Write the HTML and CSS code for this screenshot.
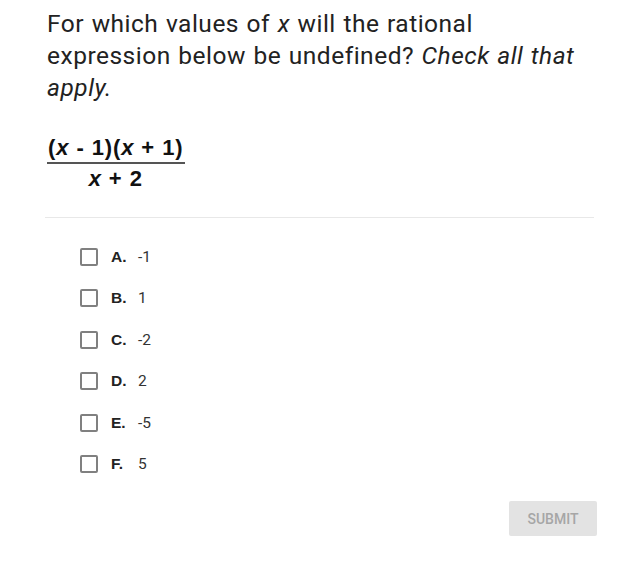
FILE: index.html
```html
<!DOCTYPE html>
<html>
<head>
<meta charset="utf-8">
<link rel="stylesheet" href="styles.css">
</head>
<body>
<div class="page">
  <p class="question">For which values of <i>x</i> will the rational expression below be undefined? <i>Check all that apply.</i></p>
  <div class="fraction">
    <div class="num">(<i>x</i> - 1)(<i>x</i> + 1)</div>
    <div class="den"><i>x</i> + 2</div>
  </div>
  <hr class="divider">
  <ul class="options">
    <li class="option"><span class="box"></span><b class="letter">A.</b><span class="val">-1</span></li>
    <li class="option"><span class="box"></span><b class="letter">B.</b><span class="val">1</span></li>
    <li class="option"><span class="box"></span><b class="letter">C.</b><span class="val">-2</span></li>
    <li class="option"><span class="box"></span><b class="letter">D.</b><span class="val">2</span></li>
    <li class="option"><span class="box"></span><b class="letter">E.</b><span class="val">-5</span></li>
    <li class="option"><span class="box"></span><b class="letter">F.</b><span class="val">5</span></li>
  </ul>
  <div class="actions"><button class="submit">SUBMIT</button></div>
</div>
</body>
</html>
```
FILE: styles.css
```css
html, body { margin: 0; padding: 0; background: #fff; }
.page {
  padding: 8px 0 0 47px;
  width: 550px;
  font-family: Roboto, "Liberation Sans", sans-serif;
  color: #222;
}
.question {
  margin: 0;
  font-size: 24.5px;
  letter-spacing: 0.5px;
  word-spacing: 1px;
  line-height: 32px;
  width: 540px;
}
.fraction {
  display: inline-flex;
  flex-direction: column;
  align-items: center;
  margin-top: 31px;
  font-family: "Liberation Sans", Arial, sans-serif;
  font-weight: bold;
  font-size: 22px;
  letter-spacing: 0.9px;
  color: #111;
}
.num {
  padding: 0 1px 1px;
  border-bottom: 2px solid #555;
  line-height: 26px;
}
.den { line-height: 30px; }
.divider {
  margin: 23px 0 0 -2px;
  width: 549px;
  border: 0;
  border-top: 1px solid #e8e8e8;
}
.options {
  list-style: none;
  margin: 18px 0 0 33px;
  padding: 0;
}
.option {
  display: flex;
  align-items: center;
  height: 41.5px;
  font-family: "Liberation Sans", Arial, sans-serif;
  font-size: 15.5px;
  color: #222;
}
.box {
  width: 14px;
  height: 14px;
  border: 2px solid #808080;
  border-radius: 2px;
  margin-right: 13px;
}
.letter { width: 27px; }
.val { font-family: Roboto, sans-serif; color: #333; }
.actions {
  display: flex;
  justify-content: flex-end;
  margin-top: 16px;
  width: 550px;
}
.submit {
  width: 88px;
  height: 35px;
  border: 0;
  border-radius: 2px;
  background: #e3e3e3;
  color: #a6a6a6;
  font-family: Roboto, sans-serif;
  font-weight: 500;
  font-size: 14px;
  padding: 0;
}
```
